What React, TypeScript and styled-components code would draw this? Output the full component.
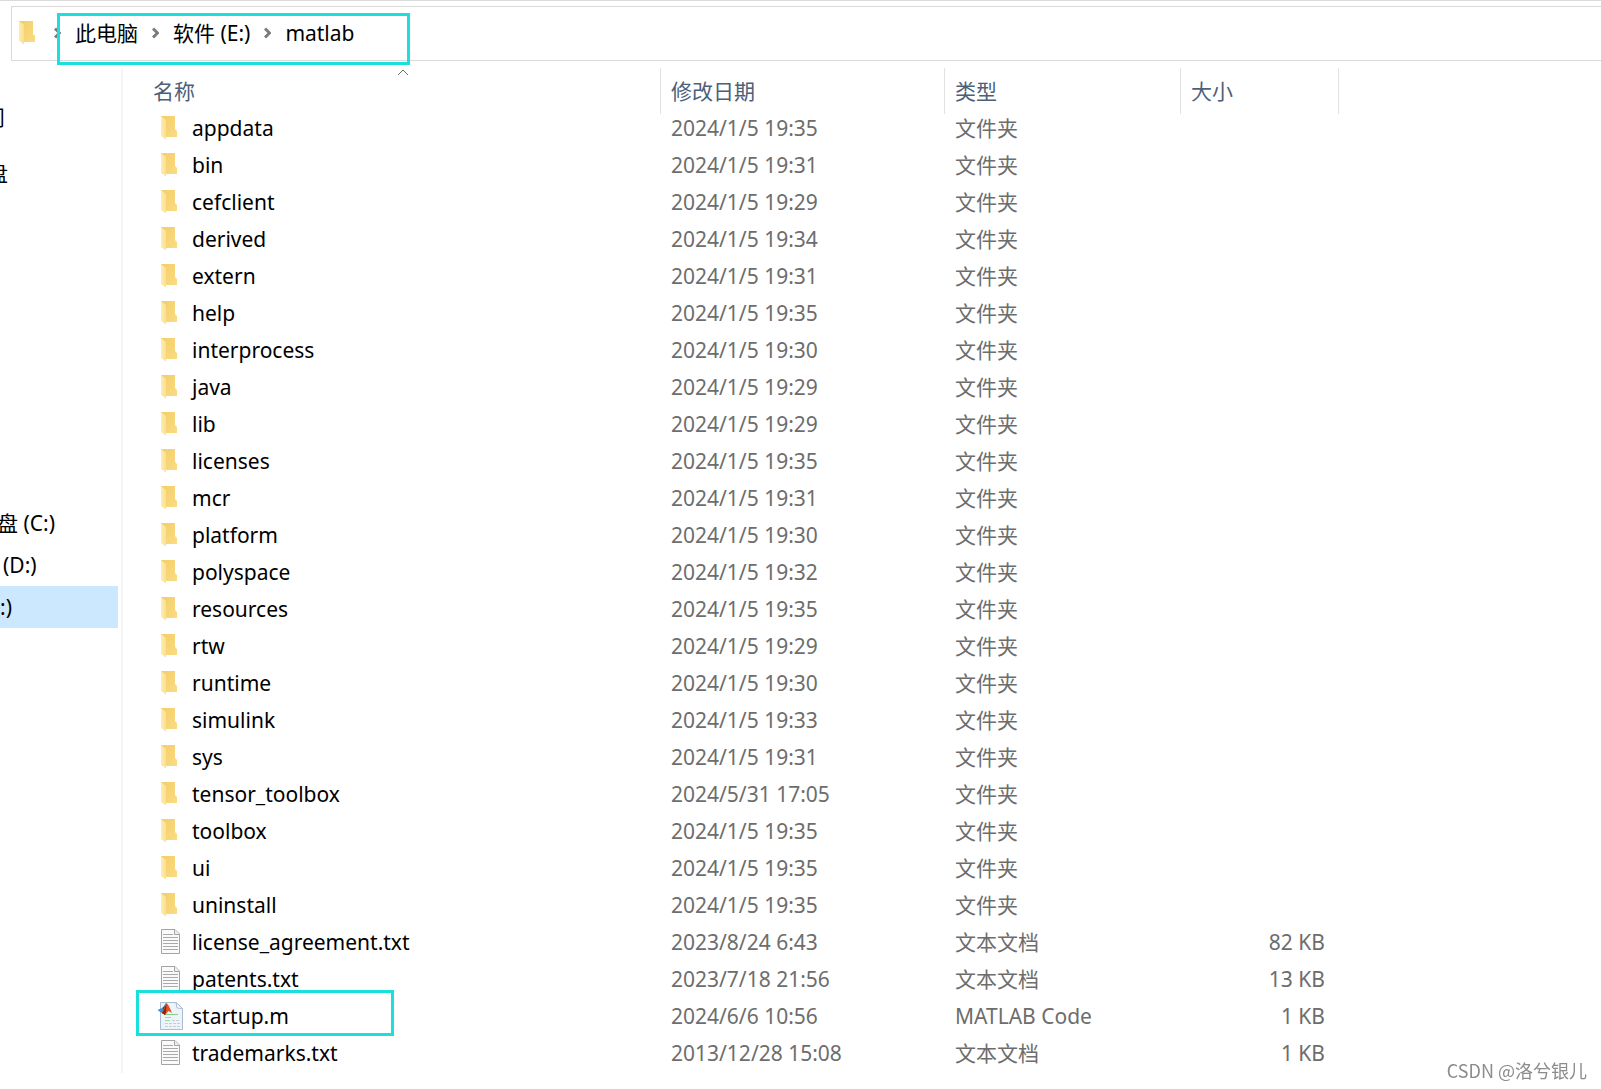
import React from "react";
import styled, { createGlobalStyle } from "styled-components";

const GlobalStyle = createGlobalStyle`
  *, *::before, *::after { box-sizing: border-box; }
  body {
    margin: 0;
    background: #fff;
    color: #000;
    font-family: "Noto Sans", "Noto Sans CJK SC", sans-serif;
    font-size: 21px;
    line-height: 28px;
  }
`;

const Shell = styled.div`
  display: flex;
  flex-direction: column;
  min-height: 100vh;
  padding-bottom: 16px;
  border-top: 1px solid #dadada;
  overflow-x: hidden;
`;

const AddressBar = styled.nav`
  display: flex;
  align-items: center;
  height: 55px;
  margin: 5px 0 7px 11px;
  padding: 0 0 2px 3px;
  border: 1px solid #d9d9d9;
  border-right: 0;
`;

const Path = styled.ol`
  position: relative;
  display: flex;
  align-items: center;
  margin: 0 0 0 11px;
  padding: 0;
  list-style: none;
`;

const Crumb = styled.li`
  display: flex;
  align-items: center;
  gap: 14px;
  margin-right: 14px;

  a {
    color: inherit;
    text-decoration: none;
  }
`;

const Highlight = styled.span<{ $top: number; $left: number; $width: number; $height: number }>`
  position: absolute;
  top: ${(p) => p.$top}px;
  left: ${(p) => p.$left}px;
  width: ${(p) => p.$width}px;
  height: ${(p) => p.$height}px;
  border: 3px solid #18e0dc;
  pointer-events: none;
`;

const Body = styled.div`
  display: flex;
  flex: 1;
`;

const Sidebar = styled.nav`
  flex: 0 0 123px;
  padding-top: 28px;
  border-right: 2px solid #f5f5f5;
  overflow: hidden;
`;

const NavGroup = styled.ul<{ $gap: number }>`
  display: flex;
  flex-direction: column;
  gap: ${(p) => p.$gap}px;
  margin: 0;
  padding: 0 3px 0 0;
  list-style: none;

  & + & {
    margin-top: 308px;
  }
`;

const NavLink = styled.a<{ $indent: number; $selected?: boolean }>`
  display: block;
  height: 42px;
  line-height: 42px;
  text-indent: ${(p) => p.$indent}px;
  white-space: nowrap;
  color: inherit;
  text-decoration: none;
  background: ${(p) => (p.$selected ? "#cce8ff" : "transparent")};
`;

const Files = styled.main`
  flex: 1;
  min-width: 0;
`;

const Table = styled.table`
  table-layout: fixed;
  width: 1216px;
  border-collapse: separate;
  border-spacing: 0;
`;

const HeadCell = styled.th<{ $first?: boolean }>`
  position: relative;
  height: 46px;
  padding: 0 0 0 ${(p) => (p.$first ? 30 : 10)}px;
  border-right: 1px solid #e2e2e2;
  color: #4c607a;
  font-weight: 400;
  text-align: left;
`;

const SortMark = styled.svg`
  position: absolute;
  top: 0;
  left: 274px;
`;

const Row = styled.tr`
  &:last-child td {
    padding-bottom: 0;
  }
`;

const Cell = styled.td`
  padding: 0 0 9px 10px;
  color: #6d6d6d;
  vertical-align: top;
  white-space: nowrap;
`;

const NameCell = styled(Cell)`
  position: relative;
  padding-left: 34px;
  color: #000;
`;

const SizeCell = styled(Cell)`
  padding-right: 14px;
  text-align: right;
`;

const Name = styled.span`
  display: flex;
  align-items: center;
  gap: 7px;
  height: 28px;
`;

const Watermark = styled.footer`
  position: fixed;
  right: 14px;
  bottom: 5px;
  color: #8c8c8c;
  font-family: "Noto Sans CJK SC", sans-serif;
  font-size: 18px;
  font-weight: 400;
`;

const FolderIcon = () => (
  <svg width="28" height="28" viewBox="0 0 28 28" aria-hidden="true">
    <defs>
      <linearGradient id="folderBack" x1="0" y1="0" x2="1" y2="1">
        <stop offset="0" stopColor="#f3cd69" />
        <stop offset="1" stopColor="#fadc82" />
      </linearGradient>
      <linearGradient id="folderFlap" x1="0" y1="0" x2="1" y2="0">
        <stop offset="0" stopColor="#ffecb0" />
        <stop offset="1" stopColor="#fbdf91" />
      </linearGradient>
    </defs>
    <path d="M4 2H18V15L20 17V23H8L4 21Z" fill="url(#folderBack)" />
    <path d="M4 2L9 6V25.500L4 22Z" fill="url(#folderFlap)" />
  </svg>
);

const TextIcon = () => (
  <svg width="28" height="28" viewBox="0 0 28 28" aria-hidden="true">
    <path d="M4.500 1.500H18L22.500 6V25.500H4.500Z" fill="#fafafa" stroke="#a3a3a3" />
    <path d="M17.500 1.500V6.500H22.500" fill="#eee" stroke="#a3a3a3" />
    <path d="M6 6.500H16M6 9.500H21M6 12.500H21M6 15.500H21M6 18.500H21M6 21.500H21" stroke="#a9a9a9" />
  </svg>
);

const MatlabIcon = () => (
  <svg width="28" height="28" viewBox="0 0 28 28" aria-hidden="true">
    <path d="M3.500 0.500H19L25.500 6.500V27.500H3.500Z" fill="#edf3f9" stroke="#a9bdd2" />
    <path d="M19 0.500L20 6L25.500 6.500Z" fill="#fff" stroke="#a9bdd2" />
    <path d="M8 12.500H21" stroke="#7fd08a" />
    <path d="M8 15.500H14M8 18.500H13" stroke="#9bdca4" />
    <path d="M15 18.500H23M8 21.500H23M8 24.500H23" stroke="#c9ced4" strokeDasharray="3 1" />
    <path d="M0.500 8L5 6L7.500 8.500L4.500 11Z" fill="#3b8fd4" />
    <path d="M5 6Q7 5 9 1L7.500 9Z" fill="#255c8f" />
    <path d="M9 1Q11 1 15 11L11.500 9L8 13L4.500 11Q7.500 7 9 1Z" fill="#e2521f" />
    <path d="M9.500 1L9 10L8 13L5 11Q8 7 9.500 1Z" fill="#8e2113" />
  </svg>
);

const Chevron = () => (
  <svg width="7" height="12" viewBox="0 0 7 12" aria-hidden="true">
    <path d="M1 1.500L5.500 6L1 10.500" fill="none" stroke="#7b7b7b" strokeWidth="3" />
  </svg>
);

type Kind = "folder" | "text" | "matlab";
type Entry = { name: string; date: string; kind: Kind; size?: string };

const folder = (name: string, date: string): Entry => ({ name, date, kind: "folder" });

const entries: Entry[] = [
  folder("appdata", "2024/1/5 19:35"),
  folder("bin", "2024/1/5 19:31"),
  folder("cefclient", "2024/1/5 19:29"),
  folder("derived", "2024/1/5 19:34"),
  folder("extern", "2024/1/5 19:31"),
  folder("help", "2024/1/5 19:35"),
  folder("interprocess", "2024/1/5 19:30"),
  folder("java", "2024/1/5 19:29"),
  folder("lib", "2024/1/5 19:29"),
  folder("licenses", "2024/1/5 19:35"),
  folder("mcr", "2024/1/5 19:31"),
  folder("platform", "2024/1/5 19:30"),
  folder("polyspace", "2024/1/5 19:32"),
  folder("resources", "2024/1/5 19:35"),
  folder("rtw", "2024/1/5 19:29"),
  folder("runtime", "2024/1/5 19:30"),
  folder("simulink", "2024/1/5 19:33"),
  folder("sys", "2024/1/5 19:31"),
  folder("tensor_toolbox", "2024/5/31 17:05"),
  folder("toolbox", "2024/1/5 19:35"),
  folder("ui", "2024/1/5 19:35"),
  folder("uninstall", "2024/1/5 19:35"),
  { name: "license_agreement.txt", date: "2023/8/24 6:43", kind: "text", size: "82 KB" },
  { name: "patents.txt", date: "2023/7/18 21:56", kind: "text", size: "13 KB" },
  { name: "startup.m", date: "2024/6/6 10:56", kind: "matlab", size: "1 KB" },
  { name: "trademarks.txt", date: "2013/12/28 15:08", kind: "text", size: "1 KB" },
];

const kinds: Record<Kind, { label: string; Icon: () => React.ReactElement }> = {
  folder: { label: "文件夹", Icon: FolderIcon },
  text: { label: "文本文档", Icon: TextIcon },
  matlab: { label: "MATLAB Code", Icon: MatlabIcon },
};

const crumbs = ["此电脑", "软件 (E:)", "matlab"];

export default function App() {
  return (
    <>
      <GlobalStyle />
      <Shell>
        <AddressBar>
          <FolderIcon />
          <Path>
            {crumbs.map((crumb) => (
              <Crumb key={crumb}>
                <Chevron />
                <a href="#">{crumb}</a>
              </Crumb>
            ))}
            <Highlight $top={-6} $left={3} $width={353} $height={52} />
          </Path>
        </AddressBar>
        <Body>
          <Sidebar>
            <NavGroup $gap={14}>
              <li><NavLink href="#" $indent={-16}>问</NavLink></li>
              <li><NavLink href="#" $indent={-13}>盘</NavLink></li>
            </NavGroup>
            <NavGroup $gap={0}>
              <li><NavLink href="#" $indent={-3}>盘 (C:)</NavLink></li>
              <li><NavLink href="#" $indent={3}>(D:)</NavLink></li>
              <li><NavLink href="#" $indent={0} $selected>:)</NavLink></li>
            </NavGroup>
          </Sidebar>
          <Files>
            <Table>
              <colgroup>
                <col width="538" />
                <col width="284" />
                <col width="236" />
                <col width="158" />
              </colgroup>
              <thead>
                <tr>
                  <HeadCell $first>
                    名称
                    <SortMark width="12" height="8" viewBox="0 0 12 8" aria-hidden="true">
                      <path d="M1 7L6 2L11 7" fill="none" stroke="#6b6b6b" />
                    </SortMark>
                  </HeadCell>
                  <HeadCell>修改日期</HeadCell>
                  <HeadCell>类型</HeadCell>
                  <HeadCell>大小</HeadCell>
                </tr>
              </thead>
              <tbody>
                {entries.map(({ name, date, kind, size }) => {
                  const { label, Icon } = kinds[kind];
                  return (
                    <Row key={name}>
                      <NameCell>
                        <Name>
                          <Icon />
                          {name}
                        </Name>
                        {kind === "matlab" && <Highlight $top={-12} $left={13} $width={258} $height={46} />}
                      </NameCell>
                      <Cell>{date}</Cell>
                      <Cell>{label}</Cell>
                      <SizeCell>{size}</SizeCell>
                    </Row>
                  );
                })}
              </tbody>
            </Table>
          </Files>
        </Body>
        <Watermark>CSDN @洛兮银儿</Watermark>
      </Shell>
    </>
  );
}
